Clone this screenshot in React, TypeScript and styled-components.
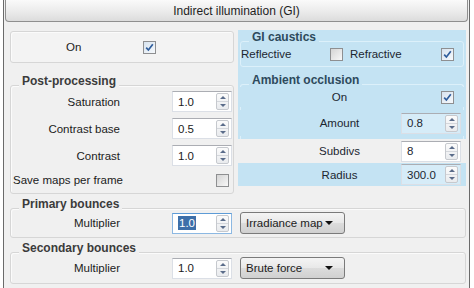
import * as React from 'react';
import styled, { createGlobalStyle } from 'styled-components';

const GlobalStyle = createGlobalStyle`
    html, body {
        margin: 0;
        padding: 0;
        background: #ffffff;
    }
    body {
        font-family: "Liberation Sans", Arial, sans-serif;
        font-size: 11.5px;
        color: #1b1b1b;
    }
`;

const PAGE_BG = '#f0f0f0';
const BLUE = '#c4e3f3';

const Frame = styled.div`
    width: 467px;
    height: 288px;
    margin-left: 3px;
    box-sizing: border-box;
    border-left: 1px solid #6a6a6a;
    border-right: 1px solid #6a6a6a;
    background: ${PAGE_BG};
    overflow: hidden;
`;

const Header = styled.div`
    height: 22px;
    margin: 0 1px;
    box-sizing: border-box;
    border: 1px solid #8f8f8f;
    border-top: none;
    border-radius: 0 0 4px 4px;
    background: linear-gradient(#fafafa, #ebebeb 55%, #dcdcdc);
    display: flex;
    align-items: center;
    justify-content: center;
    font-size: 12px;
    color: #1e1e1e;
`;

const Content = styled.div`
    padding: 8px 3px 0 6px;
`;

const TopGrid = styled.div`
    display: grid;
    grid-template-columns: 224px 1fr;
    column-gap: 4px;
    align-items: start;
`;

const Column = styled.div`
    display: flex;
    flex-direction: column;
`;

const GroupBox = styled.div<{ $line?: string; $mt?: number; $open?: boolean }>`
    margin-top: ${p => p.$mt || 0}px;
    border: 1px solid ${p => p.$line || '#d6d6d6'};
    border-bottom-width: ${p => (p.$open ? 0 : 1)}px;
    border-radius: 3px;
    box-shadow: ${p => (p.$line ? 'none' : 'inset 1px 1px 0 #fbfbfb')};
    padding-bottom: ${p => (p.$open ? 0 : 2)}px;
`;

const GroupTitle = styled.div<{ $bg?: string; $color?: string }>`
    display: table;
    margin: -12px 0 0 8px;
    padding: 0 3px;
    background: ${p => p.$bg || PAGE_BG};
    color: ${p => p.$color || '#3b3b3b'};
    font-size: 12px;
    font-weight: bold;
    line-height: 14px;
`;

const OnBox = styled.div`
    margin-top: 1px;
    height: 32px;
    box-sizing: border-box;
    border: 1px solid #d6d6d6;
    border-radius: 3px;
    box-shadow: inset 1px 1px 0 #fbfbfb;
    background: #f3f3f3;
    display: flex;
    align-items: center;
    padding-left: 55px;
`;

const Row = styled.div<{ $h: number; $mt?: number }>`
    display: flex;
    align-items: center;
    height: ${p => p.$h}px;
    margin-top: ${p => p.$mt || 0}px;
`;

const Label = styled.span<{ $w?: number; $align?: string; $ml?: number }>`
    display: inline-block;
    width: ${p => (p.$w ? `${p.$w}px` : 'auto')};
    flex: ${p => (p.$w ? 'none' : '1')};
    margin-left: ${p => p.$ml || 0}px;
    text-align: ${p => p.$align || 'left'};
    white-space: nowrap;
`;

const Panel = styled.div`
    background: ${BLUE};
    padding: 11px 2px 0;
`;

const AoRow = styled.div<{ $h: number; $mt?: number; $plain?: boolean }>`
    display: grid;
    grid-template-columns: 1fr 60px;
    align-items: center;
    height: ${p => p.$h}px;
    margin: ${p => p.$mt || 0}px -3px 0;
    padding: 0 5px 0 40px;
    background: ${p => (p.$plain ? PAGE_BG : BLUE)};
    color: #1c2630;
`;

const CenterLabel = styled.span`
    text-align: center;
`;

const Spin = styled.div<{ $tint?: boolean; $focus?: boolean; $ml?: number }>`
    width: 60px;
    height: 21px;
    margin-left: ${p => p.$ml || 0}px;
    box-sizing: border-box;
    border: 1px solid ${p => (p.$focus ? '#8cb8e2' : '#dbdfe6')};
    border-top-color: ${p => (p.$focus ? '#5d9bd6' : '#abadb3')};
    background: ${p => (p.$tint ? '#d6ecf8' : '#ffffff')};
    display: flex;
    align-items: center;
    justify-content: space-between;
    padding: 0 2px 0 5px;
`;

const Selected = styled.span`
    background: #3d6fa9;
    color: #ffffff;
    padding: 1px 1px;
`;

const SpinButtons = styled.div`
    width: 13px;
    height: 17px;
    box-sizing: border-box;
    border: 1px solid #c6c9ce;
    border-radius: 2px;
    background: linear-gradient(#fbfbfb, #e9ebee);
    display: flex;
    flex-direction: column;
`;

const SpinHalf = styled.div<{ $down?: boolean }>`
    flex: 1;
    display: flex;
    align-items: center;
    justify-content: center;
    border-top: ${p => (p.$down ? '1px solid #d4d7dc' : 'none')};
    &::after {
        content: '';
        border-left: 3px solid transparent;
        border-right: 3px solid transparent;
        border-bottom: ${p => (p.$down ? '0' : '3px solid #5a6c8a')};
        border-top: ${p => (p.$down ? '3px solid #5a6c8a' : '0')};
    }
`;

const Check = styled.span<{ $checked?: boolean; $mr?: number }>`
    display: inline-flex;
    align-items: center;
    justify-content: center;
    width: 13px;
    height: 13px;
    margin-right: ${p => p.$mr || 0}px;
    box-sizing: border-box;
    border: 1px solid #8e8f91;
    background: ${p => (p.$checked
        ? 'linear-gradient(135deg, #d7e3ef, #f6f9fc)'
        : 'linear-gradient(135deg, #d4d4d4, #f8f8f8)')};
    justify-self: end;
    flex: none;
`;

const Dropdown = styled.div`
    width: 105px;
    height: 22px;
    margin-left: 8px;
    box-sizing: border-box;
    border: 1px solid #7a7a7a;
    border-radius: 3px;
    background: linear-gradient(#f4f4f4, #e8e8e8 50%, #dcdcdc 51%, #d0d0d0);
    display: flex;
    align-items: center;
    justify-content: space-between;
    padding: 0 11px 0 5px;
    font-size: 11.5px;
    white-space: nowrap;
    &::after {
        content: '';
        border-left: 4px solid transparent;
        border-right: 4px solid transparent;
        border-top: 4px solid #111111;
    }
`;

const SaveRow = styled(Row)`
    justify-content: space-between;
    padding: 0 4px 0 2px;
`;

const CausticsRow = styled(Row)`
    padding-right: 9px;
    color: #1c2630;
`;

const CheckBox = ({ checked, mr }: { checked?: boolean; mr?: number }) => (
    <Check $checked={checked} $mr={mr}>
        {checked && (
            <svg width="9" height="9" viewBox="0 0 9 9">
                <path d="M1.2 4.6 L3.4 7 L7.8 1.3" fill="none" stroke="#2f5d9c" strokeWidth="1.7" />
            </svg>
        )}
    </Check>
);

const SpinBox = (props: { value: string; tint?: boolean; selected?: boolean; ml?: number }) => (
    <Spin $tint={props.tint} $focus={props.selected} $ml={props.ml}>
        {props.selected ? <Selected>{props.value}</Selected> : <span>{props.value}</span>}
        <SpinButtons>
            <SpinHalf />
            <SpinHalf $down />
        </SpinButtons>
    </Spin>
);

const postRows = [
    { label: 'Saturation', value: '1.0' },
    { label: 'Contrast base', value: '0.5' },
    { label: 'Contrast', value: '1.0' },
];

export default function App() {
    return (
        <>
            <GlobalStyle />
            <Frame>
                <Header>Indirect illumination (GI)</Header>
                <Content>
                    <TopGrid>
                        <Column>
                            <OnBox>
                                <Label $w={77}>On</Label>
                                <CheckBox checked />
                            </OnBox>
                            <GroupBox $mt={22}>
                                <GroupTitle>Post-processing</GroupTitle>
                                {postRows.map(r => (
                                    <Row key={r.label} $h={27}>
                                        <Label $w={109} $align="right">{r.label}</Label>
                                        <SpinBox value={r.value} ml={52} />
                                    </Row>
                                ))}
                                <SaveRow $h={22}>
                                    <span>Save maps per frame</span>
                                    <CheckBox />
                                </SaveRow>
                            </GroupBox>
                        </Column>
                        <Panel>
                            <GroupBox $line="#dcf0fa">
                                <GroupTitle $bg={BLUE} $color="#2e4a5c">GI caustics</GroupTitle>
                                <CausticsRow $h={20}>
                                    <Label $w={89}>Reflective</Label>
                                    <CheckBox />
                                    <Label $ml={7}>Refractive</Label>
                                    <CheckBox checked />
                                </CausticsRow>
                            </GroupBox>
                            <GroupBox $line="#dcf0fa" $mt={17} $open>
                                <GroupTitle $bg={BLUE} $color="#2e4a5c">Ambient occlusion</GroupTitle>
                                <AoRow $h={20}>
                                    <CenterLabel>On</CenterLabel>
                                    <CheckBox checked mr={7} />
                                </AoRow>
                                <AoRow $h={26} $mt={3}>
                                    <CenterLabel>Amount</CenterLabel>
                                    <SpinBox value="0.8" tint />
                                </AoRow>
                                <AoRow $h={24} $mt={3} $plain>
                                    <CenterLabel>Subdivs</CenterLabel>
                                    <SpinBox value="8" />
                                </AoRow>
                                <AoRow $h={23}>
                                    <CenterLabel>Radius</CenterLabel>
                                    <SpinBox value="300.0" tint />
                                </AoRow>
                            </GroupBox>
                        </Panel>
                    </TopGrid>
                    <GroupBox $mt={14}>
                        <GroupTitle>Primary bounces</GroupTitle>
                        <Row $h={24}>
                            <Label $w={109} $align="right">Multiplier</Label>
                            <SpinBox value="1.0" selected ml={52} />
                            <Dropdown>Irradiance map</Dropdown>
                        </Row>
                    </GroupBox>
                    <GroupBox $mt={14}>
                        <GroupTitle>Secondary bounces</GroupTitle>
                        <Row $h={26}>
                            <Label $w={109} $align="right">Multiplier</Label>
                            <SpinBox value="1.0" ml={52} />
                            <Dropdown>Brute force</Dropdown>
                        </Row>
                    </GroupBox>
                </Content>
            </Frame>
        </>
    );
}
